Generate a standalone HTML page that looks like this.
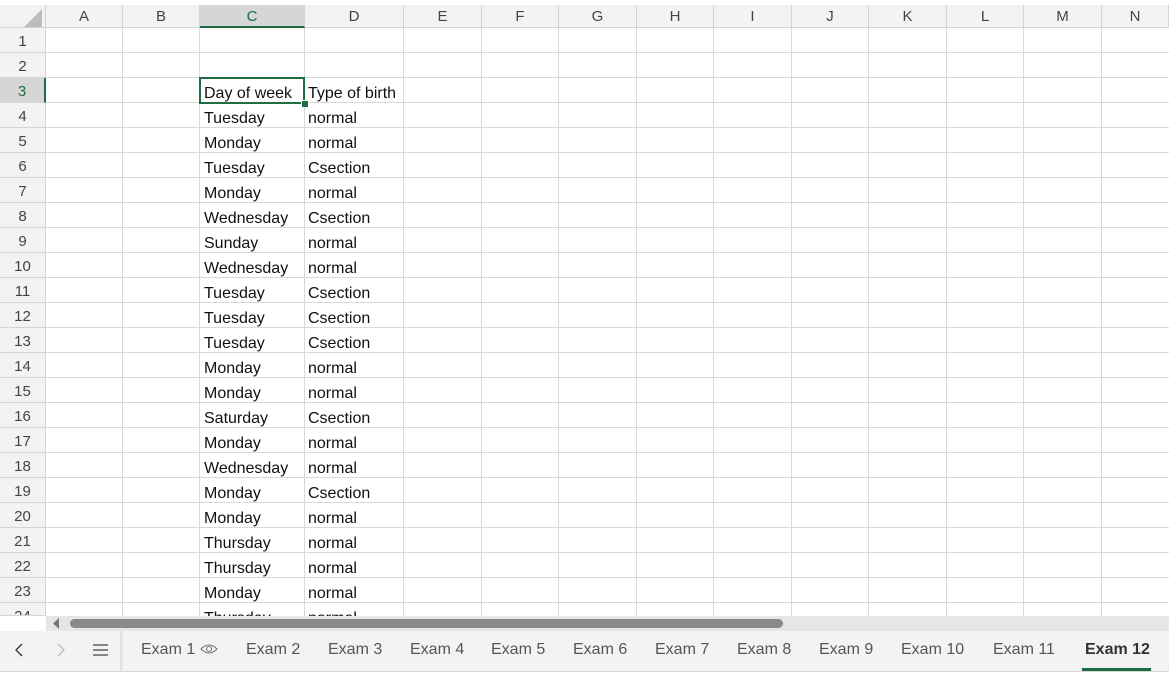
<!DOCTYPE html>
<html><head><meta charset="utf-8"><style>
body{margin:0;width:1169px;height:678px;overflow:hidden;background:#fff;font-family:"Liberation Sans",sans-serif;position:relative}
.a{position:absolute}
.ch{position:absolute;top:5px;height:23px;background:#f3f3f3;border-right:1px solid #d4d4d4;border-bottom:1px solid #d4d4d4;box-sizing:border-box;text-align:center;line-height:24px;font-size:15px;color:#444}
.rh{position:absolute;left:0;width:46px;height:25px;background:#f3f3f3;border-bottom:1px solid #d4d4d4;border-right:1px solid #d4d4d4;box-sizing:border-box;text-align:center;line-height:27px;font-size:15px;color:#444}
.vl{position:absolute;top:28px;width:1px;height:588px;background:#d9d9d9}
.hl{position:absolute;left:46px;width:1123px;height:1px;background:#d9d9d9}
.t{position:absolute;font-size:16px;color:#111;line-height:25px}
.tab{position:absolute;top:631px;height:40px;line-height:38px;font-size:16px;color:#555}
</style></head><body>
<div class="a" style="left:0;top:5px;width:46px;height:23px;background:#f3f3f3;border-right:1px solid #d4d4d4;border-bottom:1px solid #d4d4d4;box-sizing:border-box"></div>
<svg class="a" style="left:24px;top:9px" width="18" height="18"><polygon points="18,0 18,18 0,18" fill="#bdbdbd"/></svg>
<div id="g"></div>
<div class="a" style="left:0;top:616px;width:1169px;height:15px;background:#e6e6e6"></div>
<div class="a" style="left:0;top:616px;width:46px;height:15px;background:#fff"></div>
<svg class="a" style="left:52px;top:618px" width="8" height="11"><polygon points="7,0 7,11 1,5.5" fill="#777"/></svg>
<div class="a" style="left:70px;top:619px;width:713px;height:9px;border-radius:5px;background:#8a8a8a"></div>
<div class="a" style="left:0;top:631px;width:1169px;height:40px;background:#f3f3f3;border-bottom:1px solid #d8d8d8"></div>
<div class="a" style="left:120px;top:631px;width:4px;height:40px;background:linear-gradient(90deg,#ddd,#f3f3f3)"></div>
<svg class="a" style="left:12px;top:642px" width="100" height="16" fill="none" stroke-width="1.3">
<path d="M10,2 L4,8 L10,14" stroke="#333"/>
<path d="M46,2 L52,8 L46,14" stroke="#bbb"/>
<path d="M81,3 H96 M81,8 H96 M81,13 H96" stroke="#444"/>
</svg>
<div class="tab" style="left:141px">Exam 1</div>
<svg class="a" style="left:200px;top:643px" width="18" height="12" fill="none" stroke="#777" stroke-width="1.1"><path d="M1,6 Q9,-2 17,6 Q9,14 1,6Z"/><circle cx="9" cy="6" r="2.5"/></svg>
<div class="tab" style="left:246px">Exam 2</div>
<div class="tab" style="left:328px">Exam 3</div>
<div class="tab" style="left:410px">Exam 4</div>
<div class="tab" style="left:491px">Exam 5</div>
<div class="tab" style="left:573px">Exam 6</div>
<div class="tab" style="left:655px">Exam 7</div>
<div class="tab" style="left:737px">Exam 8</div>
<div class="tab" style="left:819px">Exam 9</div>
<div class="tab" style="left:901px">Exam 10</div>
<div class="tab" style="left:993px">Exam 11</div>
<div class="tab" style="left:1085px;font-weight:bold;color:#333">Exam 12</div>
<div class="a" style="left:1082px;top:668px;width:69px;height:3px;background:#1e6e42"></div>
<script>
var g=document.getElementById('g'),h='';
var cols=['A','B','C','D','E','F','G','H','I','J','K','L','M','N'];
var xs=[46,123,200,305,404,482,559,637,714,792,869,947,1024,1102,1169];
for(var i=0;i<14;i++){
 var sel=i==2;
 h+='<div class="ch" style="left:'+xs[i]+'px;width:'+(xs[i+1]-xs[i])+'px;'+(sel?'background:#d6d6d6;color:#1e6e42;border-bottom:2px solid #1e6e42':'')+'">'+cols[i]+'</div>';
 if(i>0)h+='<div class="vl" style="left:'+(xs[i]-1)+'px"></div>';
}
for(var r=1;r<=24;r++){
 var y=28+(r-1)*25;var hh=r==24?13:25;
 h+='<div class="rh" style="top:'+y+'px;height:'+hh+'px;'+(r==3?'background:#d6d6d6;color:#1e6e42;border-right:2px solid #1e6e42':'')+(r==24?';overflow:hidden':'')+'">'+r+'</div>';
 h+='<div class="hl" style="top:'+(y+24)+'px"></div>';
}
var d=[['Day of week','Type of birth'],['Tuesday','normal'],['Monday','normal'],['Tuesday','Csection'],['Monday','normal'],['Wednesday','Csection'],['Sunday','normal'],['Wednesday','normal'],['Tuesday','Csection'],['Tuesday','Csection'],['Tuesday','Csection'],['Monday','normal'],['Monday','normal'],['Saturday','Csection'],['Monday','normal'],['Wednesday','normal'],['Monday','Csection'],['Monday','normal'],['Thursday','normal'],['Thursday','normal'],['Monday','normal'],['Thursday','normal']];
for(var k=0;k<d.length;k++){
 var y=78+k*25+3;
 var st=k==21?'height:12px;overflow:hidden;':'';
 h+='<div class="t" style="left:204px;top:'+y+'px;'+st+'">'+d[k][0]+'</div>';
 h+='<div class="t" style="left:308px;top:'+y+'px;'+st+'">'+d[k][1]+'</div>';
}
h+='<div class="a" style="left:199px;top:77px;width:106px;height:27px;border:2px solid #1e6e42;box-sizing:border-box"></div>';
h+='<div class="a" style="left:301px;top:100px;width:6px;height:6px;background:#1e6e42;border:1px solid #fff"></div>';
g.innerHTML=h;
</script>
</body></html>
